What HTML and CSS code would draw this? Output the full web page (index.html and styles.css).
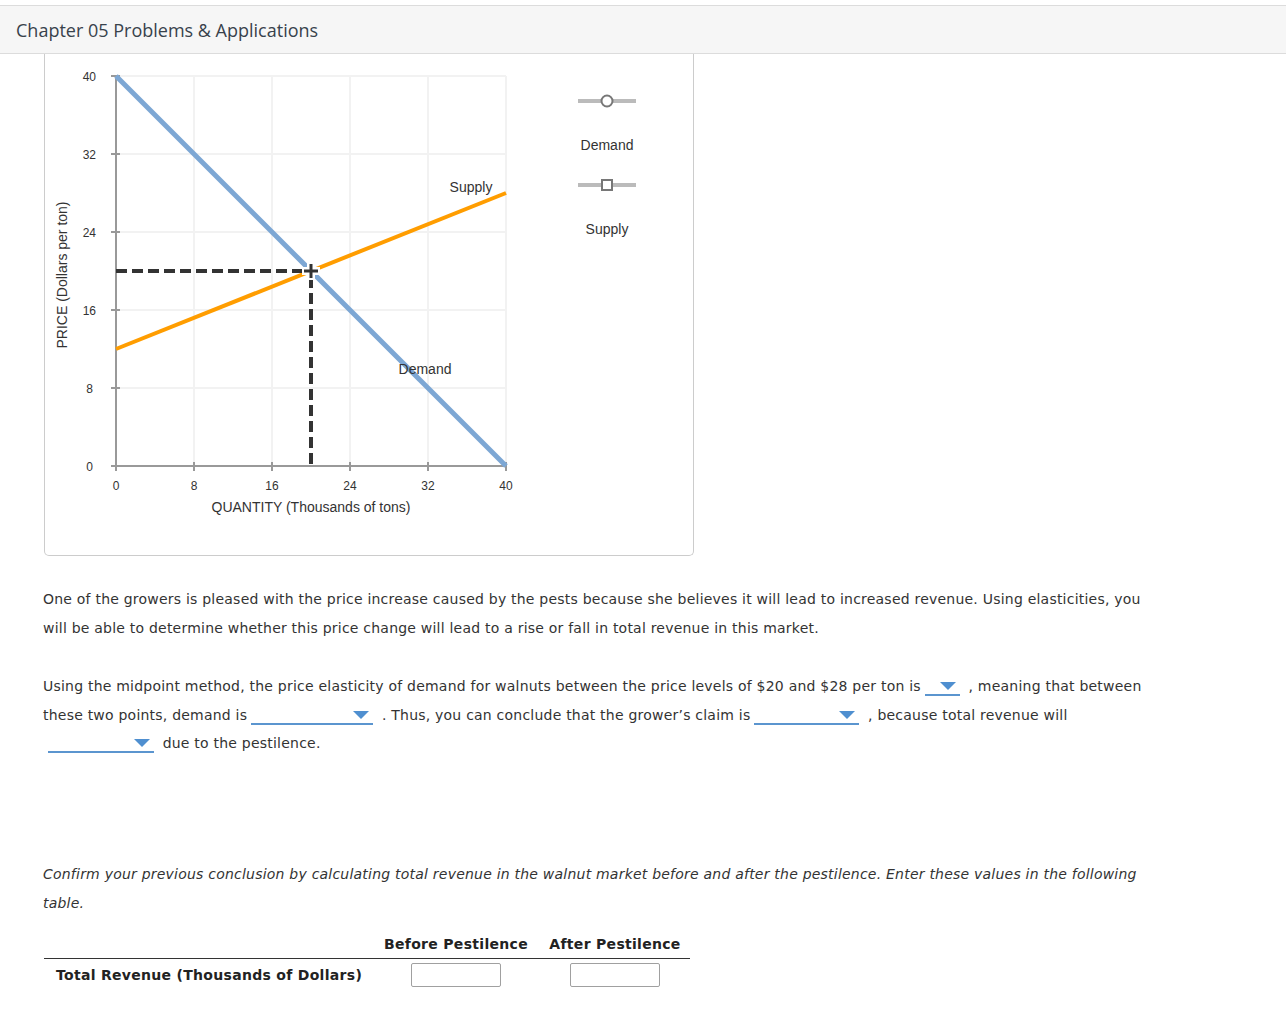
FILE: index.html
```html
<!DOCTYPE html>
<html>
<head>
<meta charset="utf-8">
<link rel="stylesheet" href="styles.css">
</head>
<body>
<div class="topstrip"></div>
<header class="titlebar"><h1 class="title">Chapter 05 Problems &amp; Applications</h1></header>
<main class="content">
  <div class="graphbox">
    <svg class="graph" width="648" height="501" viewBox="0 0 648 501" xmlns="http://www.w3.org/2000/svg">
      <g transform="translate(-45,-54)">
        <g class="grid">
          <line x1="194" y1="76" x2="194" y2="466"/>
          <line x1="272" y1="76" x2="272" y2="466"/>
          <line x1="350" y1="76" x2="350" y2="466"/>
          <line x1="428" y1="76" x2="428" y2="466"/>
          <line x1="506" y1="76" x2="506" y2="466"/>
          <line x1="116" y1="76" x2="506" y2="76"/>
          <line x1="116" y1="154" x2="506" y2="154"/>
          <line x1="116" y1="232" x2="506" y2="232"/>
          <line x1="116" y1="310" x2="506" y2="310"/>
          <line x1="116" y1="388" x2="506" y2="388"/>
        </g>
        <g class="axis">
          <line x1="116" y1="75" x2="116" y2="467"/>
          <line x1="115" y1="466" x2="507" y2="466"/>
          <line x1="111" y1="76" x2="120" y2="76"/>
          <line x1="111" y1="154" x2="120" y2="154"/>
          <line x1="111" y1="232" x2="120" y2="232"/>
          <line x1="111" y1="310" x2="120" y2="310"/>
          <line x1="111" y1="388" x2="120" y2="388"/>
          <line x1="111" y1="466" x2="120" y2="466"/>
          <line x1="116" y1="462" x2="116" y2="471"/>
          <line x1="194" y1="462" x2="194" y2="471"/>
          <line x1="272" y1="462" x2="272" y2="471"/>
          <line x1="350" y1="462" x2="350" y2="471"/>
          <line x1="428" y1="462" x2="428" y2="471"/>
          <line x1="506" y1="462" x2="506" y2="471"/>
        </g>
        <g class="ticklabels">
          <text class="ylab" x="96" y="81">40</text>
          <text class="ylab" x="96" y="159">32</text>
          <text class="ylab" x="96" y="237">24</text>
          <text class="ylab" x="96" y="315">16</text>
          <text class="ylab" x="93" y="393">8</text>
          <text class="ylab" x="93" y="471">0</text>
          <text class="xlab" x="116" y="490">0</text>
          <text class="xlab" x="194" y="490">8</text>
          <text class="xlab" x="272" y="490">16</text>
          <text class="xlab" x="350" y="490">24</text>
          <text class="xlab" x="428" y="490">32</text>
          <text class="xlab" x="506" y="490">40</text>
        </g>
        <text class="axistitle" x="311" y="512">QUANTITY (Thousands of tons)</text>
        <text class="axistitle" transform="translate(67,275) rotate(-90)">PRICE (Dollars per ton)</text>

        <line class="demand" x1="116" y1="76" x2="506" y2="466"/>
        <line class="supply" x1="116" y1="349" x2="506" y2="193"/>

        <line class="dash" x1="116" y1="271" x2="305" y2="271"/>
        <line class="dash" x1="311" y1="277" x2="311" y2="466"/>
        <g class="halo">
          <line x1="302" y1="271" x2="320" y2="271"/>
          <line x1="311" y1="262" x2="311" y2="280"/>
        </g>
        <g class="cross">
          <line x1="304" y1="271" x2="318" y2="271"/>
          <line x1="311" y1="264" x2="311" y2="278"/>
        </g>

        <text class="curvelab" x="471" y="192">Supply</text>
        <text class="curvelab" x="425" y="374">Demand</text>

        <line class="legendline" x1="578" y1="101" x2="636" y2="101"/>
        <circle class="legendmark" cx="607" cy="101" r="5.5"/>
        <text class="curvelab" x="607" y="150">Demand</text>
        <line class="legendline" x1="578" y1="185" x2="636" y2="185"/>
        <rect class="legendmark" x="602" y="180" width="10" height="10"/>
        <text class="curvelab" x="607" y="234">Supply</text>
      </g>
    </svg>
  </div>

  <p class="para p1">One of the growers is pleased with the price increase caused by the pests because she believes it will lead to increased revenue. Using elasticities, you will be able to determine whether this price change will lead to a rise or fall in total revenue in this market.</p>

  <p class="para p2">Using the midpoint method, the price elasticity of demand for walnuts between the price levels of $20 and $28 per ton is<span class="dropdown dd-xs"><span class="caret"></span></span> , meaning that between these two points, demand is<span class="dropdown dd-l"><span class="caret"></span></span> . Thus, you can conclude that the grower’s claim is<span class="dropdown dd-m"><span class="caret"></span></span> , because total revenue will <span class="dropdown dd-m2"><span class="caret"></span></span> due to the pestilence.</p>

  <p class="para p3 italic">Confirm your previous conclusion by calculating total revenue in the walnut market before and after the pestilence. Enter these values in the following table.</p>

  <table class="revtable">
    <thead>
      <tr>
        <th class="c1"></th>
        <th class="c2">Before Pestilence</th>
        <th class="c3">After Pestilence</th>
      </tr>
    </thead>
    <tbody>
      <tr>
        <td class="c1 rowlabel">Total Revenue (Thousands of Dollars)</td>
        <td class="c2"><span class="inputbox"></span></td>
        <td class="c3"><span class="inputbox"></span></td>
      </tr>
    </tbody>
  </table>
</main>
</body>
</html>
```

FILE: styles.css
```css
html, body {
  margin: 0;
  padding: 0;
  background: #ffffff;
}

body {
  font-family: "DejaVu Sans", Verdana, sans-serif;
  color: #333333;
}

.topstrip {
  height: 5px;
  background: #ffffff;
}

.titlebar {
  background: #f6f6f6;
  border-top: 1px solid #dcdcdc;
  border-bottom: 1px solid #dcdcdc;
  height: 47px;
  display: flex;
  align-items: center;
  padding-left: 16px;
}

.title {
  margin: 0;
  font-family: "Open Sans", sans-serif;
  font-weight: 400;
  font-size: 18px;
  color: #38424c;
  line-height: 1;
}

.content {
  padding-left: 43px;
}

.graphbox {
  margin-left: 1px;
  width: 648px;
  height: 501px;
  border: 1px solid #cccccc;
  border-top: none;
  border-radius: 0 0 5px 5px;
}

.graph {
  display: block;
}

.grid line {
  stroke: #f2f2f2;
  stroke-width: 2;
}

.axis line {
  stroke: #999999;
  stroke-width: 2;
}

.ticklabels text {
  font-family: "Liberation Sans", Arial, sans-serif;
  font-size: 12px;
  fill: #333333;
}

.ylab {
  text-anchor: end;
}

.xlab {
  text-anchor: middle;
}

.axistitle {
  font-family: "Liberation Sans", Arial, sans-serif;
  font-size: 14px;
  fill: #333333;
  text-anchor: middle;
}

.curvelab {
  font-family: "Liberation Sans", Arial, sans-serif;
  font-size: 14px;
  fill: #333333;
  text-anchor: middle;
}

.demand {
  stroke: #7da7d4;
  stroke-width: 5;
}

.supply {
  stroke: #ff9d00;
  stroke-width: 4;
}

.dash {
  stroke: #333333;
  stroke-width: 4;
  stroke-dasharray: 11 5;
}

.halo line {
  stroke: #ffffff;
  stroke-width: 8;
}

.cross line {
  stroke: #333333;
  stroke-width: 3;
}

.legendline {
  stroke: #bbbbbb;
  stroke-width: 4;
}

.legendmark {
  fill: #ffffff;
  stroke: #777777;
  stroke-width: 2;
}

.para {
  margin: 0;
  width: 1112px;
  font-size: 14px;
  letter-spacing: 0.22px;
  line-height: 29px;
  color: #333333;
}

.p1 {
  margin-top: 29px;
}

.p2 {
  margin-top: 29px;
  line-height: 28.5px;
}

.p3 {
  margin-top: 102px;
}

.italic {
  font-style: italic;
}

.dropdown {
  display: inline-block;
  position: relative;
  height: 17px;
  vertical-align: -5px;
  border-bottom: 2px solid #5b95cf;
  margin: 0 4px;
}

.dd-xs { width: 35px; }
.dd-l { width: 122px; }
.dd-m { width: 105px; }
.dd-m2 { width: 106px; margin-left: 5px; }

.caret {
  position: absolute;
  right: 4px;
  top: 5px;
  width: 0;
  height: 0;
  border-left: 8px solid transparent;
  border-right: 8px solid transparent;
  border-top: 8px solid #4f8fd0;
}

.revtable {
  margin-top: 13px;
  margin-left: 1px;
  width: 646px;
  border-collapse: collapse;
  font-size: 14px;
  letter-spacing: 0.3px;
  color: #222222;
}

.revtable th {
  font-weight: 700;
  height: 27px;
  padding: 0;
  border-bottom: 1px solid #333333;
  vertical-align: middle;
  white-space: nowrap;
}

.revtable td {
  padding: 4px 0 3px;
  vertical-align: middle;
}

.c1 { width: 320px; }
.c2 { width: 160px; text-align: center; }
.c3 { width: 150px; text-align: center; padding-left: 4px !important; }

.rowlabel {
  font-weight: 700;
  padding-left: 12px !important;
  text-align: left;
  white-space: nowrap;
}

.inputbox {
  display: inline-block;
  width: 88px;
  height: 22px;
  border: 1px solid #a0a0a0;
  border-radius: 2px;
  vertical-align: middle;
}
```
